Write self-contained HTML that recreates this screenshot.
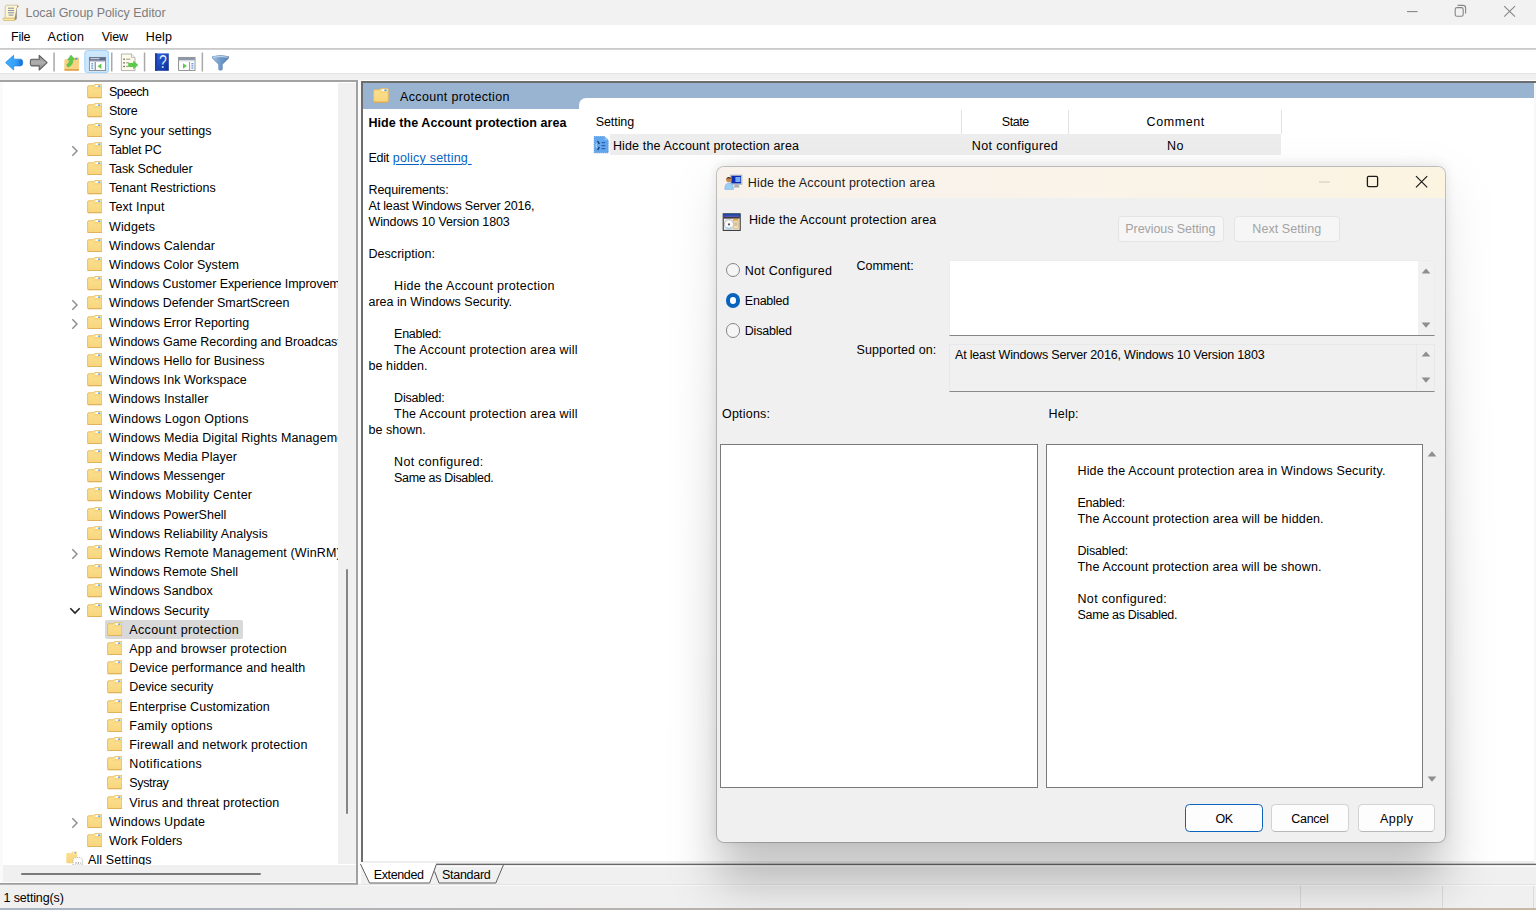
<!DOCTYPE html>
<html><head><meta charset="utf-8"><title>Local Group Policy Editor</title>
<style>
html,body{margin:0;padding:0;background:#fff}
body{width:1536px;height:910px;overflow:hidden;position:relative;font-family:"Liberation Sans", sans-serif;font-size:12.5px;color:#000}
.b{position:absolute;display:block}
.t{position:absolute;white-space:pre;line-height:16px;height:16px}
#tree{position:absolute;left:3px;top:82px;width:335px;height:782.6px;overflow:hidden}
#tree>.in{position:absolute;left:-3px;top:-82px;width:400px;height:900px}
</style></head><body>
<svg width="0" height="0" style="position:absolute"><defs>
<linearGradient id="fg" x1="0" y1="0" x2="0" y2="1"><stop offset="0" stop-color="#fbe192"/><stop offset="1" stop-color="#f8d57b"/></linearGradient>
<linearGradient id="hg" x1="0" y1="0" x2="1" y2="1"><stop offset="0" stop-color="#2f68e0"/><stop offset="1" stop-color="#0b2a93"/></linearGradient>
<linearGradient id="fun" x1="0" y1="0" x2="1" y2="0"><stop offset="0" stop-color="#9dbfe0"/><stop offset=".5" stop-color="#6f9bc9"/><stop offset="1" stop-color="#587fae"/></linearGradient>
<linearGradient id="fwd" x1="0" y1="0" x2="0" y2="1"><stop offset="0" stop-color="#8a8a8a"/><stop offset=".5" stop-color="#b0b0b0"/><stop offset="1" stop-color="#858585"/></linearGradient>
<linearGradient id="bk" x1="0" y1="0" x2="1" y2="0"><stop offset="0" stop-color="#3eb0ff"/><stop offset=".6" stop-color="#32a0f8"/><stop offset="1" stop-color="#1767d0"/></linearGradient>
<symbol id="fold" viewBox="0 0 16 15">
 <path d="M0.6 3.1 Q0.6 1.8 1.9 1.8 H6.1 Q6.9 1.8 7.4 1 Q7.9 0.3 8.9 0.3 H14.1 Q15.3 0.3 15.3 1.5 V13.2 Q15.3 14.3 14.1 14.3 H1.8 Q0.6 14.3 0.6 13.2 Z" fill="url(#fg)" stroke="#e4b95e" stroke-width=".9"/>
 <rect x="8.7" y="1.25" width="5.3" height="1.9" rx=".95" fill="#fffef4"/>
 <rect x="11.3" y="1.5" width="2.4" height="1.4" rx=".6" fill="#4491e8"/>
 <path d="M6.9 4.6 Q8 4.3 8.5 4.0 H15" fill="none" stroke="#efc565" stroke-width=".7"/>
 <path d="M0.9 13.4 Q1 14.2 1.9 14.2 H14 Q14.9 14.2 15 13.4" fill="none" stroke="#d9a54f" stroke-width=".9"/>
</symbol>
<symbol id="allset" viewBox="0 0 18 16">
 <path d="M0.3 3.0 Q0.3 2 1.3 2 H5.3 L6.3 0.6 H10.2 Q11.2 0.6 11.2 1.6 V11.2 Q11.2 12.2 10.2 12.2 H1.3 Q0.3 12.2 0.3 11.2 Z" fill="url(#fg)"/>
 <rect x="7.6" y="1.1" width="2.6" height="1.6" fill="#fffdf2"/><rect x="8.4" y="1.3" width="1.6" height="1.1" fill="#3d8fe8"/>
 <path d="M7 14 V9.5 Q7 6.6 10 6.6 H13 Q16.6 6.6 16.6 10 V14 Z" fill="#fdfdfd" stroke="#b8b8b8" stroke-width="1" stroke-dasharray="1.2 .8"/>
 <circle cx="10" cy="12" r=".7" fill="#8a8a8a"/><circle cx="12.4" cy="12" r=".7" fill="#8a8a8a"/><circle cx="14.6" cy="12" r=".6" fill="#9a9a9a"/>
</symbol>
</defs></svg>
<div class="b" style="left:0px;top:0px;width:1536px;height:25px;background:#f2f2f2"></div>
<div class="b" style="left:0px;top:25px;width:1536px;height:23px;background:#fff"></div>
<div class="b" style="left:0px;top:48px;width:1536px;height:2px;background:linear-gradient(#c6c6c6,#d9d9d9)"></div>
<div class="b" style="left:0px;top:50px;width:1536px;height:23px;background:#fff"></div>
<div class="b" style="left:0px;top:73px;width:1536px;height:7px;background:#f0f0f0;border-top:1px solid #e3e3e3;box-sizing:border-box"></div>
<div class="b" style="left:0px;top:80px;width:358px;height:2px;background:#a3a3a3"></div>
<div class="b" style="left:355px;top:82px;width:1px;height:800px;background:#fdfdfd"></div>
<div class="b" style="left:356px;top:80px;width:2px;height:805px;background:#a1a1a1"></div>
<div class="b" style="left:358px;top:80px;width:3px;height:804px;background:#fbfbfb"></div>
<div class="b" style="left:0px;top:82px;width:3px;height:801px;background:#fafafa"></div>
<div class="b" style="left:338px;top:83px;width:18px;height:781px;background:#f0f0f0"></div>
<div class="b" style="left:346px;top:569px;width:2px;height:245px;background:#858585;border-radius:1px"></div>
<div class="b" style="left:3px;top:865px;width:353px;height:17px;background:#f0f0f0"></div>
<div class="b" style="left:21px;top:873px;width:240px;height:1.5px;background:#7a7a7a;border-radius:1px"></div>
<div class="b" style="left:0px;top:882px;width:356px;height:1px;background:#fdfdfd"></div>
<div class="b" style="left:0px;top:883px;width:358px;height:2px;background:linear-gradient(#9b9b9b 50%,#b4b4b4 50%)"></div>
<div class="b" style="left:361px;top:81px;width:1175px;height:2px;background:#6d6d6d"></div>
<div class="b" style="left:361px;top:81px;width:2px;height:781px;background:#6d6d6d"></div>
<div class="b" style="left:363px;top:83px;width:1171px;height:26px;background:#99b4d1"></div>
<div class="b" style="left:363px;top:109px;width:1171px;height:755px;background:#fff"></div>
<div class="b" style="left:1534px;top:83px;width:2px;height:781px;background:#f7f7f7"></div>
<div class="b" style="left:579px;top:98px;width:955px;height:40px;background:#fff;border-top-left-radius:7px"></div>
<div class="b" style="left:961px;top:110px;width:1px;height:24px;background:#e2e2e2"></div>
<div class="b" style="left:1068px;top:110px;width:1px;height:24px;background:#e2e2e2"></div>
<div class="b" style="left:1281px;top:110px;width:1px;height:24px;background:#e2e2e2"></div>
<div class="b" style="left:610px;top:134px;width:671px;height:21px;background:#ededed"></div>
<div class="b" style="left:361px;top:864px;width:1175px;height:20px;background:#f0f0f0"></div>
<div class="b" style="left:363px;top:861px;width:1171px;height:2px;background:#eeeeee"></div>
<div class="b" style="left:436px;top:863px;width:1100px;height:4px;background:linear-gradient(#c4c4c4 25%,#686868 25% 50%,#ececec 50% 75%,#fbfbfb 75%)"></div>
<div class="b" style="left:358px;top:884px;width:1178px;height:2px;background:linear-gradient(#e3e3e3 50%,#f9f9f9 50%)"></div>
<div class="b" style="left:0px;top:885px;width:358px;height:23px;background:#f0f0f0"></div>
<div class="b" style="left:358px;top:886px;width:1178px;height:22px;background:#f0f0f0"></div>
<div class="b" style="left:1300px;top:886px;width:1px;height:22px;background:#dadada"></div>
<div class="b" style="left:1442px;top:886px;width:1px;height:22px;background:#dadada"></div>
<div class="b" style="left:1533px;top:886px;width:1px;height:22px;background:#dadada"></div>
<div class="b" style="left:0px;top:908px;width:1536px;height:2px;background:linear-gradient(90deg,#a9b4c4,#b7b3b0 40%,#c9b8a6)"></div>
<svg class="b" style="left:356px;top:860px" width="160" height="26" viewBox="356 860 160 26">
<path d="M360.5 864 L369.5 883 H429.6 L436.3 864 Z" fill="#fff"/>
<path d="M360.5 864 L369.5 883 H429.6 L436.3 864.5" fill="none" stroke="#5f5f5f" stroke-width="1"/>
<path d="M434.6 871.5 L439 883 H495.8 L503.4 865" fill="none" stroke="#5f5f5f" stroke-width="1"/>
</svg>
<div id="tree"><div class="in">
<svg class="b" style="left:86.5px;top:84.1px" width="15.6" height="14.6"><use href="#fold"/></svg>
<svg class="b" style="left:86.5px;top:103.3px" width="15.6" height="14.6"><use href="#fold"/></svg>
<svg class="b" style="left:86.5px;top:122.5px" width="15.6" height="14.6"><use href="#fold"/></svg>
<svg class="b" style="left:86.5px;top:141.7px" width="15.6" height="14.6"><use href="#fold"/></svg>
<svg class="b" style="left:70px;top:144.9px" width="10" height="12"><path d="M2.3 1.3 L7 6 L2.3 10.7" fill="none" stroke="#8b8b8b" stroke-width="1.4"/></svg>
<svg class="b" style="left:86.5px;top:160.9px" width="15.6" height="14.6"><use href="#fold"/></svg>
<svg class="b" style="left:86.5px;top:180.1px" width="15.6" height="14.6"><use href="#fold"/></svg>
<svg class="b" style="left:86.5px;top:199.3px" width="15.6" height="14.6"><use href="#fold"/></svg>
<svg class="b" style="left:86.5px;top:218.5px" width="15.6" height="14.6"><use href="#fold"/></svg>
<svg class="b" style="left:86.5px;top:237.7px" width="15.6" height="14.6"><use href="#fold"/></svg>
<svg class="b" style="left:86.5px;top:256.9px" width="15.6" height="14.6"><use href="#fold"/></svg>
<svg class="b" style="left:86.5px;top:276.1px" width="15.6" height="14.6"><use href="#fold"/></svg>
<svg class="b" style="left:86.5px;top:295.3px" width="15.6" height="14.6"><use href="#fold"/></svg>
<svg class="b" style="left:70px;top:298.5px" width="10" height="12"><path d="M2.3 1.3 L7 6 L2.3 10.7" fill="none" stroke="#8b8b8b" stroke-width="1.4"/></svg>
<svg class="b" style="left:86.5px;top:314.5px" width="15.6" height="14.6"><use href="#fold"/></svg>
<svg class="b" style="left:70px;top:317.7px" width="10" height="12"><path d="M2.3 1.3 L7 6 L2.3 10.7" fill="none" stroke="#8b8b8b" stroke-width="1.4"/></svg>
<svg class="b" style="left:86.5px;top:333.7px" width="15.6" height="14.6"><use href="#fold"/></svg>
<svg class="b" style="left:86.5px;top:352.9px" width="15.6" height="14.6"><use href="#fold"/></svg>
<svg class="b" style="left:86.5px;top:372.1px" width="15.6" height="14.6"><use href="#fold"/></svg>
<svg class="b" style="left:86.5px;top:391.3px" width="15.6" height="14.6"><use href="#fold"/></svg>
<svg class="b" style="left:86.5px;top:410.5px" width="15.6" height="14.6"><use href="#fold"/></svg>
<svg class="b" style="left:86.5px;top:429.7px" width="15.6" height="14.6"><use href="#fold"/></svg>
<svg class="b" style="left:86.5px;top:448.9px" width="15.6" height="14.6"><use href="#fold"/></svg>
<svg class="b" style="left:86.5px;top:468.1px" width="15.6" height="14.6"><use href="#fold"/></svg>
<svg class="b" style="left:86.5px;top:487.3px" width="15.6" height="14.6"><use href="#fold"/></svg>
<svg class="b" style="left:86.5px;top:506.5px" width="15.6" height="14.6"><use href="#fold"/></svg>
<svg class="b" style="left:86.5px;top:525.7px" width="15.6" height="14.6"><use href="#fold"/></svg>
<svg class="b" style="left:86.5px;top:544.9px" width="15.6" height="14.6"><use href="#fold"/></svg>
<svg class="b" style="left:70px;top:548.1px" width="10" height="12"><path d="M2.3 1.3 L7 6 L2.3 10.7" fill="none" stroke="#8b8b8b" stroke-width="1.4"/></svg>
<svg class="b" style="left:86.5px;top:564.1px" width="15.6" height="14.6"><use href="#fold"/></svg>
<svg class="b" style="left:86.5px;top:583.3px" width="15.6" height="14.6"><use href="#fold"/></svg>
<svg class="b" style="left:86.5px;top:602.5px" width="15.6" height="14.6"><use href="#fold"/></svg>
<svg class="b" style="left:69px;top:605.6px" width="12" height="10"><path d="M1.3 2.3 L6 7 L10.7 2.3" fill="none" stroke="#222" stroke-width="1.6"/></svg>
<div class="b" style="left:105px;top:620px;width:138px;height:19px;background:#d9d9d9;border-radius:2px"></div>
<svg class="b" style="left:106.7px;top:621.7px" width="15.6" height="14.6"><use href="#fold"/></svg>
<svg class="b" style="left:106.7px;top:640.9px" width="15.6" height="14.6"><use href="#fold"/></svg>
<svg class="b" style="left:106.7px;top:660.1px" width="15.6" height="14.6"><use href="#fold"/></svg>
<svg class="b" style="left:106.7px;top:679.3px" width="15.6" height="14.6"><use href="#fold"/></svg>
<svg class="b" style="left:106.7px;top:698.5px" width="15.6" height="14.6"><use href="#fold"/></svg>
<svg class="b" style="left:106.7px;top:717.7px" width="15.6" height="14.6"><use href="#fold"/></svg>
<svg class="b" style="left:106.7px;top:736.9px" width="15.6" height="14.6"><use href="#fold"/></svg>
<svg class="b" style="left:106.7px;top:756.1px" width="15.6" height="14.6"><use href="#fold"/></svg>
<svg class="b" style="left:106.7px;top:775.3px" width="15.6" height="14.6"><use href="#fold"/></svg>
<svg class="b" style="left:106.7px;top:794.5px" width="15.6" height="14.6"><use href="#fold"/></svg>
<svg class="b" style="left:86.5px;top:813.7px" width="15.6" height="14.6"><use href="#fold"/></svg>
<svg class="b" style="left:70px;top:816.9px" width="10" height="12"><path d="M2.3 1.3 L7 6 L2.3 10.7" fill="none" stroke="#8b8b8b" stroke-width="1.4"/></svg>
<svg class="b" style="left:86.5px;top:832.9px" width="15.6" height="14.6"><use href="#fold"/></svg>
<svg class="b" style="left:66.4px;top:851.1px" width="18" height="16"><use href="#allset"/></svg>
<span class="t " style="left:109.0px;top:84px;letter-spacing:-0.481px;">Speech</span>
<span class="t " style="left:109.0px;top:103px;letter-spacing:-0.298px;">Store</span>
<span class="t " style="left:109.0px;top:123px;letter-spacing:0.027px;">Sync your settings</span>
<span class="t " style="left:109.0px;top:142px;letter-spacing:-0.188px;">Tablet PC</span>
<span class="t " style="left:109.0px;top:161px;letter-spacing:-0.144px;">Task Scheduler</span>
<span class="t " style="left:109.0px;top:180px;letter-spacing:0.027px;">Tenant Restrictions</span>
<span class="t " style="left:109.0px;top:199px;letter-spacing:0.133px;">Text Input</span>
<span class="t " style="left:109.0px;top:219px;letter-spacing:0.124px;">Widgets</span>
<span class="t " style="left:109.0px;top:238px;letter-spacing:0.072px;">Windows Calendar</span>
<span class="t " style="left:109.0px;top:257px;letter-spacing:0.031px;">Windows Color System</span>
<span class="t " style="left:109.0px;top:276px;letter-spacing:-0.071px;">Windows Customer Experience Improvement Program</span>
<span class="t " style="left:109.0px;top:295px;letter-spacing:-0.060px;">Windows Defender SmartScreen</span>
<span class="t " style="left:109.0px;top:315px;letter-spacing:0.030px;">Windows Error Reporting</span>
<span class="t " style="left:109.0px;top:334px;letter-spacing:-0.028px;">Windows Game Recording and Broadcasting</span>
<span class="t " style="left:109.0px;top:353px;letter-spacing:0.027px;">Windows Hello for Business</span>
<span class="t " style="left:109.0px;top:372px;letter-spacing:0.054px;">Windows Ink Workspace</span>
<span class="t " style="left:109.0px;top:391px;letter-spacing:0.090px;">Windows Installer</span>
<span class="t " style="left:109.0px;top:411px;letter-spacing:0.200px;">Windows Logon Options</span>
<span class="t " style="left:109.0px;top:430px;letter-spacing:0.106px;">Windows Media Digital Rights Management</span>
<span class="t " style="left:109.0px;top:449px;letter-spacing:0.045px;">Windows Media Player</span>
<span class="t " style="left:109.0px;top:468px;letter-spacing:-0.001px;">Windows Messenger</span>
<span class="t " style="left:109.0px;top:487px;letter-spacing:0.248px;">Windows Mobility Center</span>
<span class="t " style="left:109.0px;top:507px;letter-spacing:-0.001px;">Windows PowerShell</span>
<span class="t " style="left:109.0px;top:526px;letter-spacing:0.066px;">Windows Reliability Analysis</span>
<span class="t " style="left:109.0px;top:545px;letter-spacing:0.139px;">Windows Remote Management (WinRM)</span>
<span class="t " style="left:109.0px;top:564px;letter-spacing:-0.012px;">Windows Remote Shell</span>
<span class="t " style="left:109.0px;top:583px;letter-spacing:0.012px;">Windows Sandbox</span>
<span class="t " style="left:109.0px;top:603px;letter-spacing:0.057px;">Windows Security</span>
<span class="t " style="left:129.3px;top:622px;letter-spacing:0.350px;">Account protection</span>
<span class="t " style="left:129.3px;top:641px;letter-spacing:0.185px;">App and browser protection</span>
<span class="t " style="left:129.3px;top:660px;letter-spacing:0.081px;">Device performance and health</span>
<span class="t " style="left:129.3px;top:679px;letter-spacing:-0.061px;">Device security</span>
<span class="t " style="left:129.3px;top:699px;letter-spacing:0.032px;">Enterprise Customization</span>
<span class="t " style="left:129.3px;top:718px;letter-spacing:0.193px;">Family options</span>
<span class="t " style="left:129.3px;top:737px;letter-spacing:0.170px;">Firewall and network protection</span>
<span class="t " style="left:129.3px;top:756px;letter-spacing:0.367px;">Notifications</span>
<span class="t " style="left:129.3px;top:775px;letter-spacing:-0.365px;">Systray</span>
<span class="t " style="left:129.3px;top:795px;letter-spacing:0.135px;">Virus and threat protection</span>
<span class="t " style="left:109.0px;top:814px;letter-spacing:0.115px;">Windows Update</span>
<span class="t " style="left:109.0px;top:833px;letter-spacing:-0.072px;">Work Folders</span>
<span class="t " style="left:88.0px;top:852px;letter-spacing:0.097px;">All Settings</span>
</div></div>
<svg class="b" style="left:2px;top:4px" width="18" height="18" viewBox="2 4 18 18">
<path d="M6.2 5.2 H17.6 Q18.6 5.6 18.2 6.8 L16.6 8 V18.3 H5.2 V7 Q5.2 5.4 6.2 5.2Z" fill="#fff6cf" stroke="#b9b09a" stroke-width=".7"/>
<path d="M16.6 8 V19.2 L14.6 20.4 V18.3Z" fill="#8d8d8d"/>
<path d="M3 18.2 H14.6 V20.5 H3.8 Q2.8 20.2 3 18.2Z" fill="#fbe7a0" stroke="#c9a95a" stroke-width=".6"/>
<path d="M16.9 5.4 Q18.8 5.3 18.3 7 L17 7.6Z" fill="#c98a2b"/>
<g stroke="#8797ad" stroke-width="1.1"><path d="M8 8.2H14"/><path d="M8 10.5H14"/><path d="M8 12.8H14"/><path d="M8.6 15.1H13.4"/></g>
</svg>
<svg class="b" style="left:1400px;top:0px" width="130" height="24" viewBox="1400 0 130 24" fill="none" stroke="#868686" stroke-width="1.1">
<path d="M1407 11.6 H1417.6"/>
<rect x="1455.2" y="7.6" width="8" height="8.6" rx="1.8"/>
<path d="M1457.6 5.4 H1463 Q1465.6 5.4 1465.6 8 V13.6"/>
<path d="M1504.2 6.2 L1515 16.6 M1515 6.2 L1504.2 16.6"/>
</svg>
<svg class="b" style="left:0px;top:50px" width="240" height="24" viewBox="0 50 240 24">
<!-- back -->
<path d="M5.6 62.6 L13.6 55.3 V59.2 H20.8 Q22.8 59.4 22.8 62.6 Q22.8 65.7 20.8 65.9 H13.6 V70 Z" fill="url(#bk)" stroke="#2a86e2" stroke-width=".8" stroke-linejoin="round"/>
<!-- forward -->
<path d="M47.1 62.6 L39.2 55.3 V59.2 H31.6 Q30.3 59.4 30.3 62.6 Q30.3 65.7 31.6 65.9 H39.2 V70 Z" fill="url(#fwd)" stroke="#5e5e5e" stroke-width="1.1" stroke-linejoin="round"/>
<g fill="#a9a9a9"><rect x="53.3" y="52.5" width="1.5" height="19"/><rect x="111" y="52.5" width="1.5" height="19"/><rect x="143.8" y="52.5" width="1.5" height="19"/><rect x="201.6" y="52.5" width="1.5" height="19"/></g>
<!-- folder up -->
<path d="M64.3 60.4 Q64.3 59.3 65.4 59.3 H71 L72.4 57.6 H78 Q79.1 57.6 79.1 58.7 V69.6 Q79.1 70.7 78 70.7 H65.4 Q64.3 70.7 64.3 69.6Z" fill="#f7d283"/>
<path d="M64.3 69 H79.1 V69.7 Q79.1 70.7 78 70.7 H65.4 Q64.3 70.7 64.3 69.7Z" fill="#dfa64d"/>
<rect x="75" y="58.1" width="2.6" height="1.5" rx=".7" fill="#4a90e2"/>
<path d="M66.6 64.8 Q69.8 62.6 69.4 59.8 L67.4 60 L71 55 L74.6 59.6 L72.9 59.6 Q73.4 65.4 68 67.2Z" fill="#5cc84c" stroke="#4ab03e" stroke-width=".4"/>
<!-- selected button -->
<rect x="84.8" y="50.6" width="23.8" height="22" rx="2.6" fill="#cce7fb" stroke="#9fd3fb" stroke-width="1"/>
<rect x="89.4" y="57.4" width="16.2" height="13" fill="#fff" stroke="#808080" stroke-width=".9"/>
<rect x="89.4" y="57.4" width="16.2" height="3.4" fill="#5b6c8c"/><path d="M90.5 58.7H99.5" stroke="#fff" stroke-width=".8"/>
<rect x="89.8" y="60.8" width="15.4" height="1.3" fill="#c9ced6"/>
<path d="M95.2 62 V70" stroke="#66758c" stroke-width="1"/>
<g fill="#3f86e0"><rect x="91.2" y="63.3" width="2" height="1.1"/><rect x="91.2" y="65.4" width="2" height="1.1"/><rect x="91.2" y="67.6" width="2" height="1.1"/></g>
<path d="M97.6 66.2 L101.4 63.4 V69Z" fill="#5cc84c"/>
<!-- export list -->
<path d="M121.4 54 H131.4 L135 57.6 V70.6 H121.4Z" fill="#fffbe9" stroke="#9e9e9e" stroke-width=".8"/>
<path d="M131.4 54 V57.6 H135" fill="#e9e9e9" stroke="#9e9e9e" stroke-width=".6"/>
<g fill="#3b3b3b"><rect x="123.4" y="58.6" width="1.3" height="1.3"/><rect x="123.4" y="62.2" width="1.3" height="1.3"/><rect x="123.4" y="65.8" width="1.3" height="1.3"/></g>
<g stroke="#8c8c8c" stroke-width=".9"><path d="M126 59.2H130.4"/><path d="M126 62.8H129"/><path d="M126 66.4H128.4"/></g>
<path d="M128.2 63 H133.2 V60.6 L138.2 65 L133.2 69.4 V67 H128.2Z" fill="#5cc84c"/>
<!-- help -->
<rect x="155" y="53.4" width="13.8" height="17.4" fill="url(#hg)"/>
<rect x="155" y="53.4" width="2.2" height="17.4" fill="#1c3fa8"/>
<text transform="translate(162.9 68.1) scale(.78 1)" font-family="Liberation Sans, sans-serif" font-size="18" fill="#e4ecff" text-anchor="middle">?</text>
<!-- panel -->
<rect x="178.6" y="57.4" width="16.4" height="13" fill="#fff" stroke="#858585" stroke-width=".9"/>
<rect x="178.6" y="57.4" width="16.4" height="2.8" fill="#8e98a8"/>
<rect x="179" y="60.2" width="15.6" height="1.2" fill="#d3d7dd"/>
<path d="M189.6 62 V70" stroke="#7a8899" stroke-width=".9"/>
<g fill="#3f86e0"><rect x="191.4" y="63.2" width="2" height="1.1"/><rect x="191.4" y="65.3" width="2" height="1.1"/><rect x="191.4" y="67.5" width="2" height="1.1"/></g>
<path d="M186.8 66 L183 63.2 V68.8Z" fill="#5cc84c"/>
<!-- funnel -->
<path d="M212.4 56.6 Q220.5 54.6 228.6 56.6 V58.2 L222.3 64.4 V69.6 Q220.5 71 218.7 69.6 V64.4 L212.4 58.2Z" fill="url(#fun)" stroke="#5b82b0" stroke-width=".6"/>
<path d="M213.4 57.2 Q220.5 55.8 227.6 57.2" stroke="#d7e6f5" stroke-width=".9" fill="none"/>
</svg>
<svg class="b" style="left:373.2px;top:88.3px" width="16" height="15"><use href="#fold"/></svg>
<svg class="b" style="left:593px;top:135px" width="17" height="19" viewBox="593 135 17 19">
<path d="M594.2 136.6 H604.6 L608.2 140 V152.8 H594.2Z" fill="#62a6ec" stroke="#3f8ae0" stroke-width=".8" stroke-dasharray="1.2 .8"/>
<path d="M604.6 136.6 V140 H608.2" fill="#8fc2f5"/>
<path d="M597.6 141 L599.4 144 M597.6 150 L599.4 147" stroke="#12306b" stroke-width="1.3"/>
<path d="M596.6 143.5 Q595.4 145.5 596.6 147.6" stroke="#bfe0ff" stroke-width="1" fill="none"/>
<g fill="#2a5faf"><rect x="601.6" y="142" width="3.6" height="1.2"/><rect x="601.6" y="145" width="3.6" height="1.2"/><rect x="601.6" y="148" width="3.6" height="1.2"/></g>
</svg>
<span class="t " style="left:25.5px;top:5px;letter-spacing:-0.035px;color:#7d7d7d;">Local Group Policy Editor</span>
<span class="t " style="left:11.0px;top:29px;letter-spacing:-0.219px;">File</span>
<span class="t " style="left:47.5px;top:29px;letter-spacing:0.350px;">Action</span>
<span class="t " style="left:101.7px;top:29px;letter-spacing:-0.192px;">View</span>
<span class="t " style="left:145.8px;top:29px;letter-spacing:0.160px;">Help</span>
<span class="t " style="left:400.0px;top:89px;letter-spacing:0.350px;">Account protection</span>
<span class="t " style="left:368.5px;top:115px;letter-spacing:0.058px;font-weight:bold;">Hide the Account protection area</span>
<span class="t " style="left:368.5px;top:150px;letter-spacing:-0.249px;">Edit</span>
<span class="t " style="left:392.8px;top:150px;letter-spacing:0.212px;color:#0563c1;text-decoration:underline;text-underline-offset:2px;">policy setting </span>
<span class="t " style="left:368.5px;top:182px;letter-spacing:-0.091px;">Requirements:</span>
<span class="t " style="left:368.5px;top:198px;letter-spacing:-0.176px;">At least Windows Server 2016,</span>
<span class="t " style="left:368.5px;top:214px;letter-spacing:-0.151px;">Windows 10 Version 1803</span>
<span class="t " style="left:368.5px;top:246px;letter-spacing:0.045px;">Description:</span>
<span class="t " style="left:394.1px;top:278px;letter-spacing:0.289px;">Hide the Account protection</span>
<span class="t " style="left:368.5px;top:294px;letter-spacing:-0.003px;">area in Windows Security.</span>
<span class="t " style="left:394.1px;top:326px;letter-spacing:-0.266px;">Enabled:</span>
<span class="t " style="left:394.1px;top:342px;letter-spacing:0.200px;">The Account protection area will</span>
<span class="t " style="left:368.5px;top:358px;letter-spacing:0.079px;">be hidden.</span>
<span class="t " style="left:394.1px;top:390px;letter-spacing:-0.191px;">Disabled:</span>
<span class="t " style="left:394.1px;top:406px;letter-spacing:0.200px;">The Account protection area will</span>
<span class="t " style="left:368.5px;top:422px;letter-spacing:0.039px;">be shown.</span>
<span class="t " style="left:394.1px;top:454px;letter-spacing:0.316px;">Not configured:</span>
<span class="t " style="left:394.1px;top:470px;letter-spacing:-0.326px;">Same as Disabled.</span>
<span class="t " style="left:595.7px;top:114px;letter-spacing:-0.070px;">Setting</span>
<span class="t " style="left:1001.7px;top:114px;letter-spacing:-0.397px;">State</span>
<span class="t " style="left:1146.5px;top:114px;letter-spacing:0.602px;">Comment</span>
<span class="t " style="left:612.9px;top:138px;letter-spacing:0.152px;">Hide the Account protection area</span>
<span class="t " style="left:971.8px;top:138px;letter-spacing:0.353px;">Not configured</span>
<span class="t " style="left:1167.0px;top:138px;letter-spacing:0.516px;">No</span>
<span class="t " style="left:373.7px;top:867px;letter-spacing:-0.361px;">Extended</span>
<span class="t " style="left:442.0px;top:867px;letter-spacing:-0.276px;">Standard</span>
<span class="t " style="left:3.5px;top:890px;letter-spacing:-0.140px;">1 setting(s)</span>
<svg class="b" style="left:600px;top:100px" width="936" height="810" viewBox="600 100 936 810">
<defs><linearGradient id="shg" x1="0" y1="0" x2="0" y2="1"><stop offset="0" stop-color="#000" stop-opacity=".09"/><stop offset=".55" stop-color="#000" stop-opacity=".20"/><stop offset="1" stop-color="#000" stop-opacity=".235"/></linearGradient>
<filter id="shb" filterUnits="userSpaceOnUse" x="560" y="60" width="1040" height="960"><feGaussianBlur stdDeviation="24"/></filter></defs>
<rect x="717" y="183" width="728" height="700" rx="8" fill="url(#shg)" filter="url(#shb)"/>
</svg>
<div class="b" style="left:717px;top:167px;width:728px;height:675px;border-radius:7px;background:#f0f0f0;box-shadow:0 0 0 1px rgba(0,0,0,.20),0 -2px 12px rgba(0,0,0,.10);overflow:hidden"><div style="height:31px;background:linear-gradient(90deg,#f8f2ec,#f9f3ea 45%,#fbf4e1)"></div></div>
<div class="b" style="left:1117.5px;top:215.5px;width:106px;height:26px;background:#f6f6f6;border:1px solid #e4e4e4;border-radius:4px;box-sizing:border-box"></div>
<div class="b" style="left:1233.5px;top:215.5px;width:106px;height:26px;background:#f6f6f6;border:1px solid #e4e4e4;border-radius:4px;box-sizing:border-box"></div>
<div class="b" style="left:725.8px;top:263.1px;width:14.4px;height:14.4px;border-radius:50%;background:#f5f5f5;border:1.2px solid #858585;box-sizing:border-box"></div>
<div class="b" style="left:725.8px;top:293.2px;width:14.4px;height:14.4px;border-radius:50%;background:#fff;border:4px solid #0a64be;box-sizing:border-box"></div>
<div class="b" style="left:725.8px;top:323.2px;width:14.4px;height:14.4px;border-radius:50%;background:#f5f5f5;border:1.2px solid #858585;box-sizing:border-box"></div>
<div class="b" style="left:949px;top:260px;width:486px;height:76px;background:#fff;border:1px solid #ececec;border-bottom:1.5px solid #868686;box-sizing:border-box"></div>
<div class="b" style="left:1418px;top:261px;width:16px;height:73.5px;background:#f1f1f1"></div>
<div class="b" style="left:949px;top:344px;width:486px;height:47.5px;background:#f0f0f0;border:1px solid #e8e8e8;border-bottom:1.5px solid #8a8a8a;box-sizing:border-box"></div>
<div class="b" style="left:1416px;top:345px;width:1px;height:45px;background:#e8e8e8"></div>
<div class="b" style="left:720px;top:444px;width:318px;height:344px;background:#fff;border:1px solid #7a7a7a;box-sizing:border-box"></div>
<div class="b" style="left:1046px;top:444px;width:377px;height:344px;background:#fff;border:1px solid #7a7a7a;box-sizing:border-box"></div>
<div class="b" style="left:1184.8px;top:804px;width:78px;height:28px;background:#fdfdfd;border:1.5px solid #0a64be;border-radius:4.5px;box-sizing:border-box"></div>
<div class="b" style="left:1271.4px;top:804px;width:77.5px;height:28px;background:#fdfdfd;border:1px solid #d2d2d2;border-bottom-color:#b9b9b9;border-radius:4.5px;box-sizing:border-box"></div>
<div class="b" style="left:1357.7px;top:804px;width:77.5px;height:28px;background:#fdfdfd;border:1px solid #d2d2d2;border-bottom-color:#b9b9b9;border-radius:4.5px;box-sizing:border-box"></div>
<svg class="b" style="left:716px;top:166px" width="730" height="677" viewBox="716 166 730 677">
<g fill="#8e8e8e">
<path d="M1421.6 273.6 L1426 268.4 L1430.4 273.6Z"/><path d="M1421.6 322.6 L1426 327.8 L1430.4 322.6Z"/>
<path d="M1421.6 356.6 L1426 351.4 L1430.4 356.6Z"/><path d="M1421.6 377.6 L1426 382.8 L1430.4 377.6Z"/>
<path d="M1427.6 456.4 L1432 451.2 L1436.4 456.4Z"/><path d="M1427.6 776.6 L1432 781.8 L1436.4 776.6Z"/>
</g>
<path d="M1319 182 H1330" stroke="#cfcac2" stroke-width="1"/>
<rect x="1367.4" y="176.4" width="10.2" height="10.2" rx="1.3" fill="none" stroke="#1b1b1b" stroke-width="1.3"/>
<path d="M1416 176.2 L1427.2 187.4 M1427.2 176.2 L1416 187.4" stroke="#1b1b1b" stroke-width="1.2"/>
<!-- title icon: user + monitor -->
<rect x="730.6" y="175" width="11.4" height="9.4" fill="#c9cdd4" stroke="#9aa0a8" stroke-width=".5"/>
<rect x="731.4" y="175.8" width="9.6" height="7.6" fill="#0b2cb4"/>
<rect x="735.4" y="177" width="5" height="5" fill="#78aef0"/>
<path d="M735 184.4 H738.4 L739.6 187.6 H733.6Z" fill="#a9aeb5"/>
<circle cx="728.8" cy="179.6" r="2.7" fill="#c7894a"/>
<path d="M726.2 178.8 Q728.8 175.4 731.4 178.8 Q728.8 177.6 726.2 178.8Z" fill="#3a2a1a"/>
<path d="M724.8 189.4 Q724.8 183 728.8 183 Q733.4 183 733.4 189.4Z" fill="#9bd0f3" stroke="#6aa9de" stroke-width=".5"/>
<!-- setting icon -->
<rect x="723.2" y="213.8" width="17" height="16.6" fill="#ececec" stroke="#2c2c2c" stroke-width="1"/>
<rect x="723.2" y="213.8" width="17" height="3.2" fill="#1c4aa6"/>
<path d="M724.6 216.2 H738.8" stroke="#8a5ac8" stroke-width=".8"/>
<rect x="723.7" y="217" width="16" height="1.6" fill="#3a3a3a"/>
<circle cx="729" cy="224.4" r="4.6" fill="#fbfbfb" stroke="#9a9a9a" stroke-width=".6"/><circle cx="729" cy="224.4" r="1.1" fill="#555"/>
<path d="M726 227.6 Q729 229 731.6 227.4" stroke="#8fd0f0" stroke-width="1" fill="none"/>
<rect x="733.2" y="220.6" width="5.4" height="8" fill="#f5dfae" stroke="#c9a86a" stroke-width=".5"/>
<rect x="733.2" y="218.8" width="5" height="1.6" fill="#e9a23a"/>
<path d="M734.4 223H737.4M734.4 225H737.4" stroke="#8a8a8a" stroke-width=".7"/>
</svg>
<span class="t " style="left:747.8px;top:175px;letter-spacing:0.188px;color:#1b1b1b;">Hide the Account protection area</span>
<span class="t " style="left:748.9px;top:212px;letter-spacing:0.194px;">Hide the Account protection area</span>
<span class="t " style="left:1125.3px;top:221px;letter-spacing:-0.062px;color:#a3a3a3;">Previous Setting</span>
<span class="t " style="left:1252.3px;top:221px;letter-spacing:0.073px;color:#a3a3a3;">Next Setting</span>
<span class="t " style="left:744.8px;top:263px;letter-spacing:0.232px;">Not Configured</span>
<span class="t " style="left:744.8px;top:293px;letter-spacing:-0.229px;">Enabled</span>
<span class="t " style="left:744.8px;top:323px;letter-spacing:-0.206px;">Disabled</span>
<span class="t " style="left:856.6px;top:258px;letter-spacing:-0.079px;">Comment:</span>
<span class="t " style="left:856.6px;top:342px;letter-spacing:0.096px;">Supported on:</span>
<span class="t " style="left:955.0px;top:347px;letter-spacing:-0.179px;">At least Windows Server 2016, Windows 10 Version 1803</span>
<span class="t " style="left:722.0px;top:406px;letter-spacing:0.205px;">Options:</span>
<span class="t " style="left:1048.4px;top:406px;letter-spacing:0.253px;">Help:</span>
<span class="t " style="left:1077.5px;top:463px;letter-spacing:0.153px;">Hide the Account protection area in Windows Security.</span>
<span class="t " style="left:1077.5px;top:495px;letter-spacing:-0.237px;">Enabled:</span>
<span class="t " style="left:1077.5px;top:511px;letter-spacing:0.168px;">The Account protection area will be hidden.</span>
<span class="t " style="left:1077.5px;top:543px;letter-spacing:-0.178px;">Disabled:</span>
<span class="t " style="left:1077.5px;top:559px;letter-spacing:0.155px;">The Account protection area will be shown.</span>
<span class="t " style="left:1077.5px;top:591px;letter-spacing:0.323px;">Not configured:</span>
<span class="t " style="left:1077.5px;top:607px;letter-spacing:-0.314px;">Same as Disabled.</span>
<span class="t " style="left:1215.4px;top:811px;letter-spacing:-0.263px;">OK</span>
<span class="t " style="left:1291.2px;top:811px;letter-spacing:-0.264px;">Cancel</span>
<span class="t " style="left:1380.1px;top:811px;letter-spacing:0.430px;">Apply</span>
</body></html>
